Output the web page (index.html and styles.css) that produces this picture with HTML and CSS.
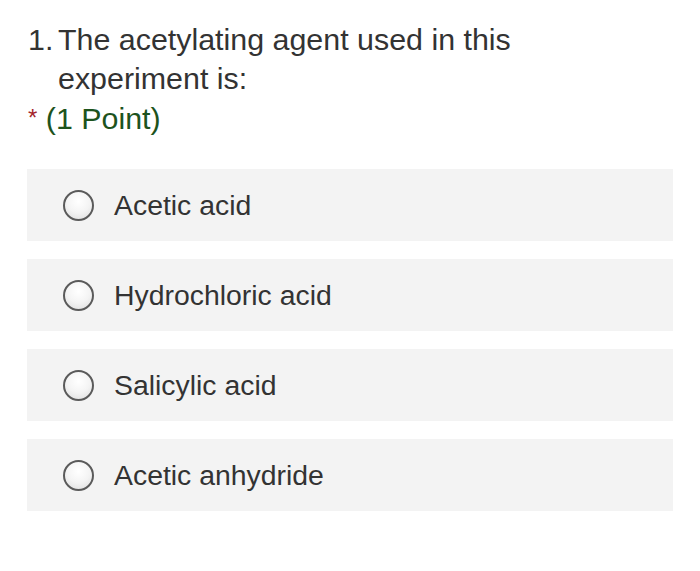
FILE: index.html
```html
<!DOCTYPE html>
<html lang="en">
<head>
<meta charset="utf-8">
<title>Question 1</title>
<link rel="stylesheet" href="styles.css">
</head>
<body>
<div class="question">
  <div class="title">
    <span class="num">1.</span>
    <span class="text">The acetylating agent used in this experiment is:</span>
  </div>
  <div class="points"><span class="req">*</span> (1 Point)</div>
  <div class="options">
    <label class="option"><span class="radio"></span><span class="label">Acetic acid</span></label>
    <label class="option"><span class="radio"></span><span class="label">Hydrochloric acid</span></label>
    <label class="option"><span class="radio"></span><span class="label">Salicylic acid</span></label>
    <label class="option"><span class="radio"></span><span class="label">Acetic anhydride</span></label>
  </div>
</div>
</body>
</html>
```
FILE: styles.css
```css
html, body {
  margin: 0;
  padding: 0;
  background: #ffffff;
}
body {
  font-family: "Liberation Sans", Arial, sans-serif;
  color: #333333;
}
.question {
  padding: 20px 27px 0 27px;
}
.title {
  display: flex;
  font-size: 30.4px;
  line-height: 39px;
  color: #333333;
}
.num {
  width: 30px;
  flex: none;
  padding-left: 1px;
}
.text {
  width: 470px;
}
.points {
  font-size: 30.4px;
  line-height: 39px;
  color: #1d531d;
  padding-left: 1px;
}
.req {
  color: #a4262c;
  font-size: 24px;
  vertical-align: 3px;
}
.options {
  margin-top: 31px;
  display: flex;
  flex-direction: column;
  gap: 18px;
}
.option {
  display: flex;
  align-items: center;
  height: 72px;
  background: #f3f3f3;
  padding-left: 36px;
  box-sizing: border-box;
}
.radio {
  width: 31px;
  height: 31px;
  box-sizing: border-box;
  border: 2px solid #5a5a5a;
  border-radius: 50%;
  background: radial-gradient(circle at 50% 35%, #ffffff 0%, #f4f4f4 50%, #dcdcdc 100%);
  flex: none;
}
.label {
  margin-left: 20px;
  font-size: 28.4px;
  color: #333333;
}
```
